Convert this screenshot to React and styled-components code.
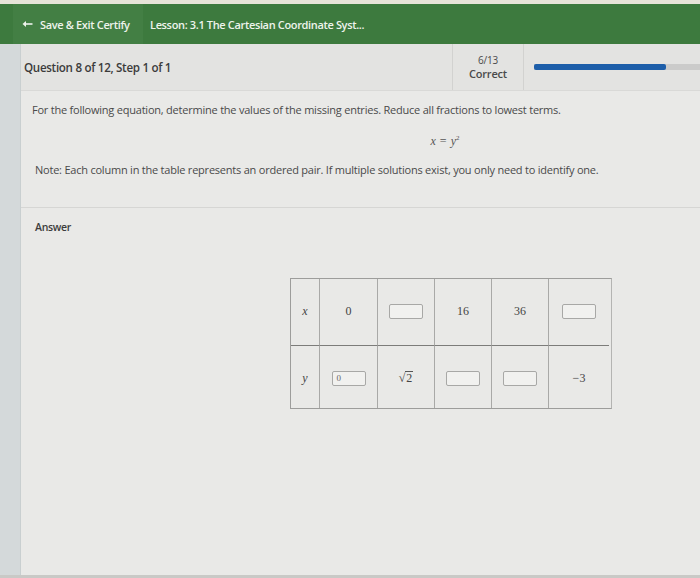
import React from "react";
import styled, { createGlobalStyle } from "styled-components";

const Global = createGlobalStyle`
  html, body { margin: 0; padding: 0; }
  body { background: #e9e9e7; font-family: "Open Sans", "Liberation Sans", sans-serif; }
  #root { width: 700px; height: 578px; overflow: hidden; }
`;

const Page = styled.div`
  width: 700px;
  height: 578px;
  display: flex;
  flex-direction: column;
  background: #e9e9e7;
  border-top: 4px solid #e6e4d8;
  box-sizing: border-box;
`;

const TopBar = styled.div`
  height: 40px;
  flex: none;
  display: flex;
  align-items: stretch;
  background: #3d7a3e;
  color: #eef3ec;
  font-size: 11px;
  font-weight: 600;
  letter-spacing: -0.35px;
  white-space: nowrap;
`;

const BackButton = styled.div`
  display: flex;
  align-items: center;
  gap: 7px;
  padding: 0 0 0 9px;
  margin-left: 13px;
  background: #437f44;
  width: 130px;
  box-sizing: border-box;
`;

const LessonTitle = styled.div`
  display: flex;
  align-items: center;
  padding-left: 7px;
`;

const Body = styled.div`
  flex: 1;
  display: flex;
`;

const SideStrip = styled.div`
  width: 20px;
  flex: none;
  background: #d4d9da;
  border-right: 1px solid #c9cfd0;
`;

const Main = styled.div`
  flex: 1;
  display: flex;
  flex-direction: column;
`;

const Header = styled.div`
  height: 46px;
  display: flex;
  align-items: stretch;
  background: #e3e3e1;
  border-bottom: 1px solid #d9d9d7;
`;

const QuestionInfo = styled.div`
  flex: 1;
  display: flex;
  align-items: center;
  padding-left: 3px;
  font-size: 11.6px;
  font-weight: 600;
  color: #3b3b3b;
  letter-spacing: -0.3px;
`;

const Score = styled.div`
  width: 70px;
  border-left: 1px solid #d2d2d0;
  border-right: 1px solid #d2d2d0;
  display: flex;
  flex-direction: column;
  align-items: center;
  justify-content: center;
  color: #4a4a4a;
  line-height: 14px;
  letter-spacing: -0.2px;
`;

const ScoreNum = styled.div`
  font-size: 10px;
`;

const ScoreLabel = styled.div`
  font-size: 11px;
  font-weight: 600;
`;

const ProgressWrap = styled.div`
  width: 176px;
  display: flex;
  align-items: center;
  padding-left: 10px;
  box-sizing: border-box;
`;

const Track = styled.div`
  flex: 1;
  height: 6px;
  background: #cbcbca;
  display: flex;
`;

const Fill = styled.div`
  height: 100%;
  background: #1d5ea9;
  border-radius: 2px;
`;

const Question = styled.div`
  padding: 12px 0 0 11px;
  height: 117px;
  box-sizing: border-box;
  border-bottom: 1px solid #d6d6d4;
  color: #4a4a4a;
  font-size: 11px;
  letter-spacing: -0.22px;
  white-space: nowrap;
`;

const Line = styled.div`
  line-height: 14px;
`;

const Equation = styled.div`
  font-family: "Liberation Serif", "DejaVu Serif", serif;
  font-size: 12px;
  color: #555;
  text-align: center;
  margin: 17px 0 14px 158px;
  letter-spacing: 0;
  word-spacing: 1px;
`;

const Note = styled(Line)`
  padding-left: 3px;
`;

const AnswerArea = styled.div`
  flex: 1;
  padding: 12px 0 0 14px;
  display: flex;
  flex-direction: column;
`;

const AnswerLabel = styled.div`
  font-size: 10.5px;
  font-weight: 600;
  color: #3c3c3c;
  letter-spacing: -0.3px;
`;

const Table = styled.div`
  margin: 44px 0 0 255px;
  width: 320px;
  display: grid;
  grid-template-columns: 28px 58px 57px 57px 57px 61px;
  grid-template-rows: 66px 63px;
  border: 1px solid #9d9d9b;
  border-right-color: #b4b4b2;
`;

const Cell = styled.div`
  display: flex;
  align-items: center;
  justify-content: center;
  border-left: ${(p) => (p.first ? "none" : "1px solid #a9a9a7")};
  border-top: ${(p) => (p.bottom ? "1px solid #7c7c7a" : "none")};
  font-family: "Liberation Serif", "DejaVu Serif", serif;
  font-size: 12px;
  color: #444;
  font-style: ${(p) => (p.italic ? "italic" : "normal")};
  padding-top: ${(p) => (p.bottom ? "2px" : "0")};
  padding-bottom: ${(p) => (p.bottom ? "0" : "1px")};
  box-sizing: border-box;
`;

const InputBox = styled.div`
  width: 34px;
  height: 15px;
  border: 1px solid #a8a8a6;
  border-radius: 2px;
  background: #f1f1ef;
  box-sizing: border-box;
  font-size: 9px;
  color: #666;
  display: flex;
  align-items: center;
  padding-left: 4px;
  font-family: "Liberation Serif", serif;
`;

const Sqrt = styled.span`
  display: inline-flex;
  align-items: flex-start;
`;

const Radicand = styled.span`
  border-top: 1px solid #555;
  line-height: 12px;
  padding: 0 1px;
`;

const BottomEdge = styled.div`
  height: 3px;
  background: #c9c9c6;
  flex: none;
`;

function ArrowLeft() {
  return (
    <svg width="11" height="8" viewBox="0 0 11 8">
      <path d="M2 4 H10.5" stroke="#eef3ec" strokeWidth="1.6" />
      <path d="M0.5 4 L4 1 V7 Z" fill="#eef3ec" />
    </svg>
  );
}

export default function App() {
  return (
    <>
      <Global />
      <Page>
        <TopBar>
          <BackButton>
            <ArrowLeft />
            <span>Save &amp; Exit Certify</span>
          </BackButton>
          <LessonTitle>Lesson: 3.1 The Cartesian Coordinate Syst...</LessonTitle>
        </TopBar>
        <Body>
          <SideStrip />
          <Main>
            <Header>
              <QuestionInfo>Question 8 of 12, Step 1 of 1</QuestionInfo>
              <Score>
                <ScoreNum>6/13</ScoreNum>
                <ScoreLabel>Correct</ScoreLabel>
              </Score>
              <ProgressWrap>
                <Track>
                  <Fill style={{ width: `${(132 / 166) * 100}%` }} />
                </Track>
              </ProgressWrap>
            </Header>
            <Question>
              <Line>
                For the following equation, determine the values of the missing entries. Reduce all fractions to lowest terms.
              </Line>
              <Equation>
                <i>x</i> = <i>y</i>
                <sup style={{ fontSize: "7px" }}>2</sup>
              </Equation>
              <Note>
                Note: Each column in the table represents an ordered pair. If multiple solutions exist, you only need to identify one.
              </Note>
            </Question>
            <AnswerArea>
              <AnswerLabel>Answer</AnswerLabel>
              <Table>
                <Cell first italic>x</Cell>
                <Cell>0</Cell>
                <Cell><InputBox /></Cell>
                <Cell>16</Cell>
                <Cell>36</Cell>
                <Cell><InputBox /></Cell>
                <Cell first bottom italic>y</Cell>
                <Cell bottom><InputBox>0</InputBox></Cell>
                <Cell bottom>
                  <Sqrt>
                    <span>√</span>
                    <Radicand>2</Radicand>
                  </Sqrt>
                </Cell>
                <Cell bottom><InputBox /></Cell>
                <Cell bottom><InputBox /></Cell>
                <Cell bottom>−3</Cell>
              </Table>
            </AnswerArea>
          </Main>
        </Body>
        <BottomEdge />
      </Page>
    </>
  );
}
